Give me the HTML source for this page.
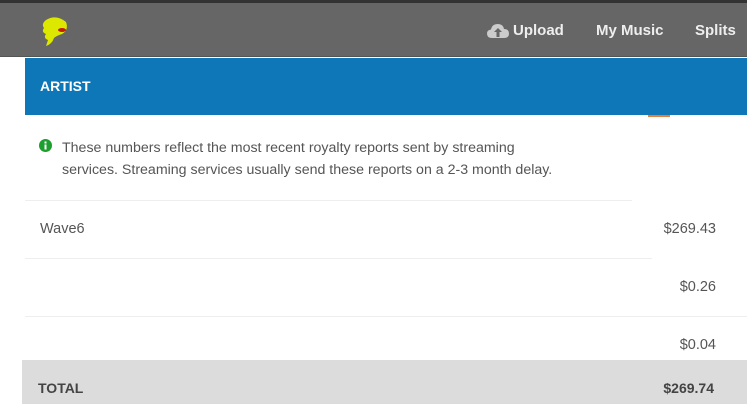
<!DOCTYPE html>
<html><head><style>
*{margin:0;padding:0;box-sizing:border-box}
body{width:747px;height:404px;overflow:hidden;background:#fff;font-family:"Liberation Sans",sans-serif;position:relative;color:#444}
.a{position:absolute}
</style></head><body>
<div class="a" style="left:0;top:0;width:747px;height:3px;background:#333"></div>
<div class="a" style="left:0;top:3px;width:747px;height:54px;background:#666;border-bottom:1px solid #555"></div>
<svg class="a" style="left:38px;top:14px" width="34" height="34" viewBox="0 0 34 34">
<path d="M8 6 Q18 0 28 8 Q31 16 24 20 Q18 22 16 24 Q14 30 8 32 L10 26 Q5 24 8 20 Q3 18 6 14 Q3 10 8 6Z" fill="#dde800"/>
<ellipse cx="24" cy="16" rx="4" ry="2" fill="#c02000"/>
</svg>
<svg class="a" style="left:487px;top:23px" width="22" height="16" viewBox="0 0 22 16"><path d="M5 15 Q0 15 0 10.5 Q0 7 4 6.5 Q5 1 11 1 Q16 1 17 6 Q22 6 22 10.5 Q22 15 17 15Z" fill="#ccc"/><path d="M11 5 L7 9 H9.5 V14 H12.5 V9 H15Z" fill="#666"/></svg>
<div class="a" style="left:513px;top:22px;color:#eee;font-weight:bold;font-size:15px">Upload</div>
<div class="a" style="left:596px;top:22px;color:#eee;font-weight:bold;font-size:15px">My Music</div>
<div class="a" style="left:695px;top:22px;color:#eee;font-weight:bold;font-size:15px">Splits</div>
<div class="a" style="left:25px;top:58px;width:722px;height:57px;background:#0e77b8"></div>
<div class="a" style="left:40px;top:78px;color:#fff;font-weight:bold;font-size:14px">ARTIST</div>
<div class="a" style="left:648px;top:115px;width:22px;height:2px;background:#e67e3c"></div>
<svg class="a" style="left:39px;top:139px" width="13" height="13" viewBox="0 0 13 13"><circle cx="6.5" cy="6.5" r="6.5" fill="#1e9e2e"/><rect x="5.5" y="5.5" width="2" height="5" fill="#fff"/><rect x="5.5" y="2.5" width="2" height="2" fill="#fff"/></svg>
<div class="a" style="left:62px;top:137px;font-size:14.2px;line-height:22px;color:#555">These numbers reflect the most recent royalty reports sent by streaming<br>services. Streaming services usually send these reports on a 2-3 month delay.</div>
<div class="a" style="left:25px;top:200px;width:607px;height:1px;background:#eee"></div>
<div class="a" style="left:40px;top:221px;font-size:14.5px;color:#555">Wave6</div>
<div class="a" style="right:31px;top:221px;font-size:14.5px;color:#555">$269.43</div>
<div class="a" style="left:25px;top:258px;width:627px;height:1px;background:#eee"></div>
<div class="a" style="right:31px;top:279px;font-size:14.5px;color:#555">$0.26</div>
<div class="a" style="left:25px;top:316px;width:722px;height:1px;background:#eee"></div>
<div class="a" style="right:31px;top:337px;font-size:14.5px;color:#555">$0.04</div>
<div class="a" style="left:22px;top:360px;width:725px;height:44px;background:#dcdcdc"></div>
<div class="a" style="left:38px;top:380px;font-size:14px;font-weight:bold;color:#444">TOTAL</div>
<div class="a" style="right:33px;top:380px;font-size:14px;font-weight:bold;color:#444">$269.74</div>
</body></html>
